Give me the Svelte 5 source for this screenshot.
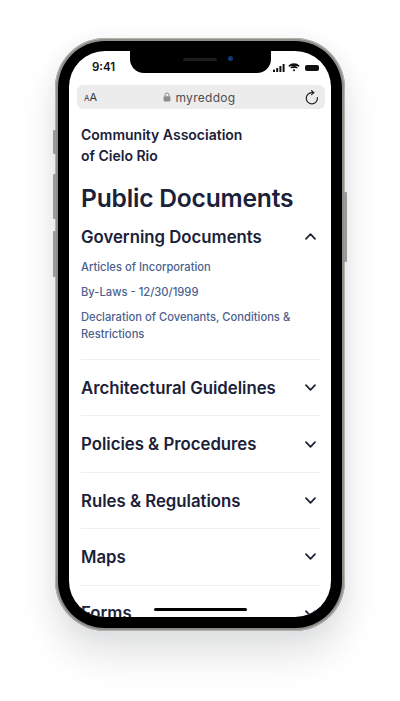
<script>
    const links = ['Articles of Incorporation', 'By-Laws - 12/30/1999', 'Declaration of Covenants, Conditions & Restrictions']
    const sections = ['Architectural Guidelines', 'Policies & Procedures', 'Rules & Regulations', 'Maps', 'Forms']
</script>

<main>
    <div class="phone">
        <span class="btn mute"></span>
        <span class="btn vol-up"></span>
        <span class="btn vol-down"></span>
        <span class="btn power"></span>
        <div class="bezel">
            <div class="screen">
                <div class="status">
                    <span class="time">9:41</span>
                    <div class="status-icons">
                        <svg width="12" height="8" viewBox="0 0 12 8"><rect x="0" y="5.5" width="2" height="2.5" rx=".5"/><rect x="3.2" y="4" width="2" height="4" rx=".5"/><rect x="6.4" y="2" width="2" height="6" rx=".5"/><rect x="9.6" y="0" width="2" height="8" rx=".5"/></svg>
                        <svg width="12" height="9" viewBox="0 0 12 9" fill="none" stroke="#111" stroke-width="1.4"><path d="M.8 3.2a7.4 7.4 0 0 1 10.4 0"/><path d="M2.7 5.1a4.7 4.7 0 0 1 6.6 0"/><path d="M6 8.4 4.6 6.9a2 2 0 0 1 2.8 0z" fill="#111" stroke="none"/></svg>
                        <div class="battery"></div>
                    </div>
                </div>
                <div class="address">
                    <span class="aa"><small>A</small>A</span>
                    <div class="url">
                        <svg width="8" height="10" viewBox="0 0 8 10"><path d="M2 4.4V3a2 2 0 0 1 4 0v1.4" fill="none" stroke="#8c8c8c" stroke-width="1"/><rect x=".6" y="4.2" width="6.8" height="5.4" rx="1" fill="#8c8c8c"/></svg>
                        <span>myreddog</span>
                    </div>
                    <svg class="reload" width="14" height="15" viewBox="0 0 14 15" fill="none" stroke="#222" stroke-width="1.2" stroke-linecap="round" stroke-linejoin="round"><path d="M12.4 7.6a5.6 5.6 0 1 1-5.6-5H8.8"/><path d="M6.6.7l2.2 1.9-2.2 2"/></svg>
                </div>
                <div class="content">
                    <h3>Community Association<br>of Cielo Rio</h3>
                    <h1>Public Documents</h1>
                    <div class="open">
                        <div class="row-head">
                            <h2>Governing Documents</h2>
                            <svg class="chev" width="11" height="7" viewBox="0 0 11 7" fill="none" stroke="#1a2033" stroke-width="1.7" stroke-linecap="round" stroke-linejoin="round"><path d="M1 5.8l4.5-4.6L10 5.8"/></svg>
                        </div>
                        <ul>
                            {#each links as link}
                                <li>{link}</li>
                            {/each}
                        </ul>
                    </div>
                    {#each sections as section}
                        <div class="row">
                            <div class="row-head">
                                <h2>{section}</h2>
                                <svg class="chev" width="11" height="7" viewBox="0 0 11 7" fill="none" stroke="#1a2033" stroke-width="1.7" stroke-linecap="round" stroke-linejoin="round"><path d="M1 1.2l4.5 4.6L10 1.2"/></svg>
                            </div>
                        </div>
                    {/each}
                </div>
                <div class="home"></div>
            </div>
            <div class="notch">
                <span class="speaker"></span>
                <span class="camera"></span>
            </div>
        </div>
    </div>
</main>

<style>
    :global(body){
        margin: 0;
        background: #fff;
    }

    main{
        height: 701px;
        overflow: hidden;
        padding-top: 38px;
        box-sizing: border-box;
        font-family: Inter, "Liberation Sans", sans-serif;
        color: #1a2138;
    }

    .phone{
        position: relative;
        width: 290px;
        height: 593px;
        margin-left: 55px;
        box-sizing: border-box;
        padding: 3px;
        border-radius: 50px;
        background: #8f8e89;
        box-shadow: inset 0 0 0 1px #b4b3ae, 0 24px 36px rgba(40, 50, 60, 0.14), 0 0 20px rgba(40, 50, 60, 0.05);
    }

    .btn{
        position: absolute;
        width: 3px;
        background: #9b9b97;
        border-radius: 1px;
    }

    .mute{ left: -2px; top: 92px; height: 24px; }
    .vol-up{ left: -2px; top: 136px; height: 45px; }
    .vol-down{ left: -2px; top: 193px; height: 46px; }
    .power{ right: -2px; top: 154px; height: 70px; }

    .bezel{
        position: relative;
        height: 100%;
        box-sizing: border-box;
        padding: 10px 11px 11px;
        border-radius: 47px;
        background: #000;
    }

    .screen{
        position: relative;
        height: 100%;
        overflow: hidden;
        border-radius: 36px;
        background: #fff;
    }

    .status{
        display: flex;
        justify-content: space-between;
        align-items: center;
        height: 31px;
        padding: 0 12px 0 23px;
        box-sizing: content-box;
    }

    .time{
        font-size: 11.5px;
        font-weight: 600;
        color: #111;
        margin-top: 1px;
    }

    .status-icons{
        display: flex;
        align-items: center;
        gap: 3px;
        margin-top: 2px;
    }

    .status-icons svg{
        fill: #111;
    }

    .battery{
        width: 14px;
        height: 6px;
        margin-left: 2px;
        border-radius: 2px;
        background: #111;
    }

    .address{
        display: flex;
        align-items: center;
        justify-content: space-between;
        height: 24px;
        margin: 3px 6px 0 8px;
        padding: 0 6px 0 7px;
        border-radius: 6px;
        background: #ececec;
    }

    .aa{
        font-size: 11px;
        color: #333;
        width: 14px;
    }

    .aa small{
        font-size: 8px;
    }

    .url{
        display: flex;
        align-items: center;
        gap: 4px;
        margin-left: -4px;
        font-size: 12px;
        letter-spacing: 0.3px;
        color: #4e4e4e;
    }

    .content{
        padding: 15px 11px 0 12px;
    }

    h3{
        margin: 0;
        font-size: 14px;
        line-height: 21px;
        font-weight: 600;
    }

    h1{
        margin: 15px 0 0;
        font-size: 24.6px;
        line-height: 34px;
        font-weight: 600;
        letter-spacing: -0.2px;
    }

    h2{
        margin: 0;
        font-size: 16.75px;
        line-height: 24px;
        font-weight: 600;
    }

    .row-head{
        display: flex;
        justify-content: space-between;
        align-items: center;
    }

    .chev{
        margin-right: 4px;
    }

    .open{
        margin-top: 9.6px;
        padding-bottom: 16.5px;
    }

    ul{
        list-style: none;
        margin: 10.4px 0 0;
        padding: 0;
        display: flex;
        flex-direction: column;
        gap: 7.8px;
    }

    li{
        font-size: 11.2px;
        line-height: 17px;
        font-weight: 500;
        color: #4c5f8e;
    }

    .row{
        border-top: 1px solid #f0f0f1;
        padding: 15.7px 0 15.7px;
    }

    .home{
        position: absolute;
        left: 85px;
        bottom: 6px;
        width: 93px;
        height: 3px;
        border-radius: 2px;
        background: #000;
    }

    .notch{
        position: absolute;
        top: 0;
        left: 72px;
        width: 141px;
        height: 32px;
        border-radius: 0 0 14px 14px;
        background: #000;
    }

    .speaker{
        position: absolute;
        left: 53px;
        top: 17px;
        width: 34px;
        height: 3px;
        border-radius: 2px;
        background: #1c1c1c;
    }

    .camera{
        position: absolute;
        left: 98px;
        top: 15px;
        width: 5px;
        height: 5px;
        border-radius: 50%;
        background: #123a78;
    }
</style>
